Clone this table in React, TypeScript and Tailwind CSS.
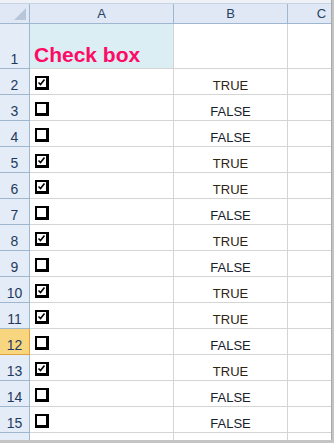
import React from "react";

const rows: { n: number; checked: boolean }[] = [
    { n: 2, checked: true },
    { n: 3, checked: false },
    { n: 4, checked: false },
    { n: 5, checked: true },
    { n: 6, checked: true },
    { n: 7, checked: false },
    { n: 8, checked: true },
    { n: 9, checked: false },
    { n: 10, checked: true },
    { n: 11, checked: true },
    { n: 12, checked: false },
    { n: 13, checked: true },
    { n: 14, checked: false },
    { n: 15, checked: false },
];

const font = { fontFamily: '"Liberation Sans", Arial, sans-serif' };

function CheckBox({ checked }: { checked: boolean }) {
    return (
        <svg width="14" height="14" viewBox="0 0 14 14" className="block">
            <rect x="0" y="0" width="14" height="14" fill="#000" />
            <rect x="2" y="2" width="9" height="9" fill="#fff" />
            {checked && (
                <path d="M3.5 6.5 L5.5 8.5 L9.5 3.5" fill="none" stroke="#000" strokeWidth="1.6" />
            )}
        </svg>
    );
}

function RowHead({ n, selected }: { n: number; selected?: boolean }) {
    return (
        <div
            className={
                selected
                    ? "flex items-end justify-center pb-[2px] leading-none text-[14px] text-[#1e3a5f] bg-[#f8d680] border-r border-b border-[#e2a23b]"
                    : "flex items-end justify-center pb-[2px] leading-none text-[14px] text-[#1e3a5f] bg-[#e4ecf7] border-r border-b border-[#9eb6ce]"
            }
        >
            {n}
        </div>
    );
}

export default function App() {
    return (
        <div className="w-[334px] h-[443px] bg-[#c4c4c4] overflow-hidden" style={font}>
            <div className="w-[332px] h-[440px] bg-white overflow-hidden border-r border-[#a8a8a8]">
                <div className="h-[4px] bg-[#eef2f7] border-b border-[#c5d3e2]" />
                <div className="grid grid-cols-[30px_144px_114px_68px] grid-rows-[20px_45px_repeat(14,26px)_10px] w-[356px]">
                    {/* header row */}
                    <div className="relative bg-[#dfe8f4] border-r border-b border-[#9eb6ce]">
                        <div className="absolute right-[3px] bottom-[3px] w-0 h-0 border-l-[12px] border-l-transparent border-b-[12px] border-b-[#b7c6d8]" />
                    </div>
                    {["A", "B", "C"].map((c) => (
                        <div
                            key={c}
                            className="flex items-center justify-center text-[13px] text-[#27415f] bg-[#dfe8f4] border-r border-b border-[#9eb6ce]"
                        >
                            {c}
                        </div>
                    ))}

                    {/* row 1 */}
                    <RowHead n={1} />
                    <div className="flex items-end pl-[4px] pb-[3px] bg-[#daeef3] border-r border-b border-[#d4d4d4]">
                        <span className="text-[21px] font-bold text-[#ff0a64] leading-none">Check box</span>
                    </div>
                    <div className="border-r border-b border-[#d4d4d4]" />
                    <div className="border-r border-b border-[#d4d4d4]" />

                    {rows.map((r) => (
                        <React.Fragment key={r.n}>
                            <RowHead n={r.n} selected={r.n === 12} />
                            <div className="flex items-center pl-[5px] pt-[3px] border-r border-b border-[#d4d4d4]">
                                <CheckBox checked={r.checked} />
                            </div>
                            <div
                                className={
                                    r.checked
                                        ? "flex items-end justify-center pb-[2px] leading-none text-[13px] text-[#2e2414] border-r border-b border-[#d4d4d4]"
                                        : "flex items-end justify-center pb-[2px] leading-none text-[13px] text-[#17202e] border-r border-b border-[#d4d4d4]"
                                }
                            >
                                {r.checked ? "TRUE" : "FALSE"}
                            </div>
                            <div className="border-r border-b border-[#d4d4d4]" />
                        </React.Fragment>
                    ))}

                    {/* partial last row */}
                    <div className="bg-[#e4ecf7] border-r border-[#9eb6ce]" />
                    <div className="border-r border-[#d4d4d4]" />
                    <div className="border-r border-[#d4d4d4]" />
                    <div className="border-r border-[#d4d4d4]" />
                </div>
            </div>
        </div>
    );
}
